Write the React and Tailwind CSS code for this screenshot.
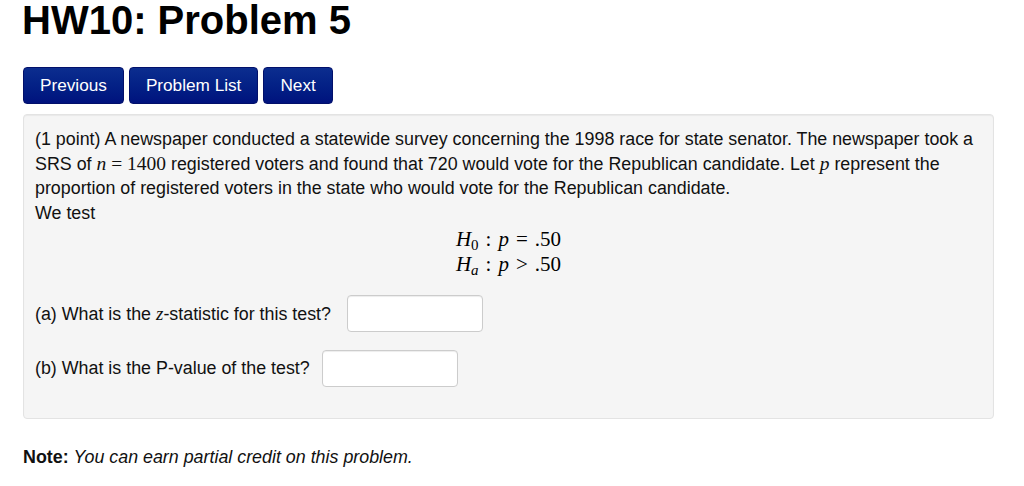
export default function App() {
  const sans = { fontFamily: '"Liberation Sans", Arial, sans-serif' };
  return (
    <div className="min-h-screen bg-white px-[23px] text-[#111]" style={sans}>
      <h1 className="text-[40px] font-bold leading-none -ml-px text-black">HW10: Problem 5</h1>

      {/* nav buttons */}
      <div className="mt-[27px] flex gap-[5px]">
        {["Previous", "Problem List", "Next"].map((label) => (
          <button
            key={label}
            className="h-[37px] px-[16px] rounded-[4px] border border-[#02106a] bg-gradient-to-b from-[#0c2d8f] to-[#00127d] text-white text-[17.2px]"
          >
            {label}
          </button>
        ))}
      </div>

      {/* problem body */}
      <div className="mt-[10px] w-[971px] rounded-[4px] border border-[#e3e3e3] bg-[#f5f5f5] px-[11px] pt-[12px] pb-[31px] text-[17.85px] shadow-[inset_0_1px_1px_rgba(0,0,0,0.05)]">
        <p className="leading-[24.6px] whitespace-nowrap">
          (1 point) A newspaper conducted a statewide survey concerning the 1998 race for state senator. The newspaper took a
          <br />
          SRS of <span className="font-['Liberation_Serif'] italic text-[19.5px]">n</span>
          <span className="font-['Liberation_Serif'] text-[19.5px]"> = 1400</span> registered voters and found that 720 would vote for the
          Republican candidate. Let <span className="font-['Liberation_Serif'] italic text-[19.5px]">p</span> represent the
          <br />
          proportion of registered voters in the state who would vote for the Republican candidate.
          <br />
          We test
        </p>

        <div className="mt-[3px] flex flex-col items-center font-['Liberation_Serif'] text-[21px] leading-[23px] text-black">
          <div className="flex items-baseline">
            <i>H</i>
            <span className="text-[15px] translate-y-[4px]">0</span>
            <span className="mx-[7px]">:</span>
            <i>p</i>
            <span className="mx-[7px]">=</span>
            <span>.50</span>
          </div>
          <div className="flex items-baseline">
            <i>H</i>
            <i className="text-[15px] translate-y-[4px]">a</i>
            <span className="mx-[7px]">:</span>
            <i>p</i>
            <span className="mx-[7px]">&gt;</span>
            <span>.50</span>
          </div>
        </div>

        <div className="mt-[17px] flex items-center gap-[16px] h-[37px]">
          <span>
            (a) What is the <i className="font-['Liberation_Serif'] text-[19px]">z</i>-statistic for this test?
          </span>
          <input type="text" className="h-[37px] w-[136px] rounded-[4px] border border-[#cccccc] bg-white shadow-[inset_0_1px_1px_rgba(0,0,0,0.075)]" />
        </div>

        <div className="mt-[18px] flex items-center gap-[12px] h-[37px]">
          <span>(b) What is the P-value of the test?</span>
          <input type="text" className="h-[37px] w-[136px] rounded-[4px] border border-[#cccccc] bg-white shadow-[inset_0_1px_1px_rgba(0,0,0,0.075)]" />
        </div>
      </div>

      <p className="mt-[26px] text-[17.85px] leading-[24px]">
        <b>Note:</b> <i>You can earn partial credit on this problem.</i>
      </p>
    </div>
  );
}
